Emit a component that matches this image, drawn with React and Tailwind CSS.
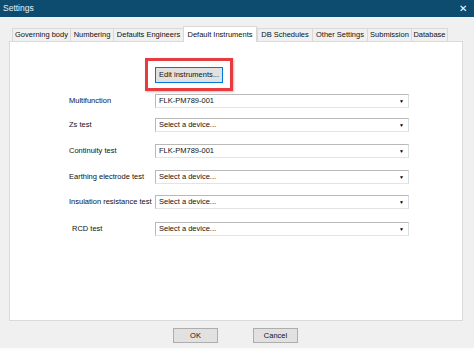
import React from "react";

// tab label + measured width
const tabs = [
  ["Governing body", "w-[58px]"],
  ["Numbering", "w-[43px]"],
  ["Defaults Engineers", "w-[70px]"],
  ["Default Instruments", "w-[74px]"],
  ["DB Schedules", "w-[55px]"],
  ["Other Settings", "w-[55px]"],
  ["Submission", "w-[44px]"],
  ["Database", "w-[37px]"],
];

const rows = [
  { label: "Multifunction", value: "FLK-PM789-001", mt: "mt-[3px]" },
  { label: "Zs test", value: "Select a device...", mt: "mt-[10px]" },
  { label: "Continuity test", value: "FLK-PM789-001", mt: "mt-[12px]" },
  { label: "Earthing electrode test", value: "Select a device...", mt: "mt-[12px]" },
  { label: "Insulation resistance test", value: "Select a device...", mt: "mt-[11px]" },
  { label: "RCD test", value: "Select a device...", mt: "mt-[13px]", indent: true },
];

const Select = ({ value }) => (
  <div className="w-[254px] h-[14px] bg-white border border-[#b9b9b9] border-b-[#e3e3e3] border-r-[#dcdcdc] flex items-center justify-between pl-[3px] pr-[4px]">
    <span className="text-[7.5px] leading-none text-[#111] whitespace-nowrap">{value}</span>
    <span className="text-[5px] leading-none text-black">▼</span>
  </div>
);

export default function App() {
  return (
    <div
      className="w-[474px] h-[350px] bg-[#f0f0f0] flex flex-col overflow-hidden text-[#111]"
      style={{ fontFamily: '"Liberation Sans", Arial, sans-serif' }}
    >
      {/* Title bar */}
      <div className="h-[17px] bg-[#0d4b6f] flex items-center justify-between pl-[3px] pr-[7px]">
        <span className="text-[#e8f0f5] text-[8.5px] leading-none">Settings</span>
        <span className="text-white text-[10px] leading-none font-light">✕</span>
      </div>

      {/* Tabs */}
      <div className="h-[24px] pl-[12px] flex items-end">
        {tabs.map(([t, w]) => {
          const active = t === "Default Instruments";
          return (
            <div
              key={t}
              className={
                active
                  ? `${w} h-[16px] bg-white border border-[#d9d9d9] border-b-0 flex items-center justify-center -mb-px relative z-10 text-[7.5px] leading-none whitespace-nowrap`
                  : `${w} h-[13px] bg-[#f0f0f0] border border-[#d9d9d9] border-b-0 border-r-0 last:border-r flex items-center justify-center text-[7.5px] leading-none whitespace-nowrap`
              }
            >
              {t}
            </div>
          );
        })}
      </div>

      {/* Panel */}
      <div className="ml-[9px] w-[454px] h-[280px] bg-white border border-[#dadada] flex flex-col">
        <div className="ml-[135px] mt-[16px] w-[88px] h-[33px] border-[3px] border-[#e63b3f] shadow-[1px_1px_2px_rgba(0,0,0,0.25)] flex items-center justify-center">
          <div className="w-[68px] h-[16px] bg-[#e1e1e1] border border-[#0078d7] flex items-center justify-center text-[7.5px] leading-none whitespace-nowrap">
            Edit instruments...
          </div>
        </div>

        {rows.map((r) => (
          <div key={r.label} className={`flex items-center ${r.mt}`}>
            <div
              className={`w-[145px] text-[7.5px] leading-none whitespace-nowrap ${
                r.indent ? "pl-[62px]" : "pl-[59px]"
              }`}
            >
              {r.label}
            </div>
            <Select value={r.value} />
          </div>
        ))}
      </div>

      {/* Footer */}
      <div className="flex-1 flex items-start pt-[7px] pl-[173px] gap-[35px] border-b-2 border-[#fbfbfb]">
        <div className="w-[45px] h-[15px] bg-[#e1e1e1] border border-[#adadad] flex items-center justify-center text-[7.5px] leading-none">
          OK
        </div>
        <div className="w-[45px] h-[15px] bg-[#e1e1e1] border border-[#adadad] flex items-center justify-center text-[7.5px] leading-none">
          Cancel
        </div>
      </div>
    </div>
  );
}
